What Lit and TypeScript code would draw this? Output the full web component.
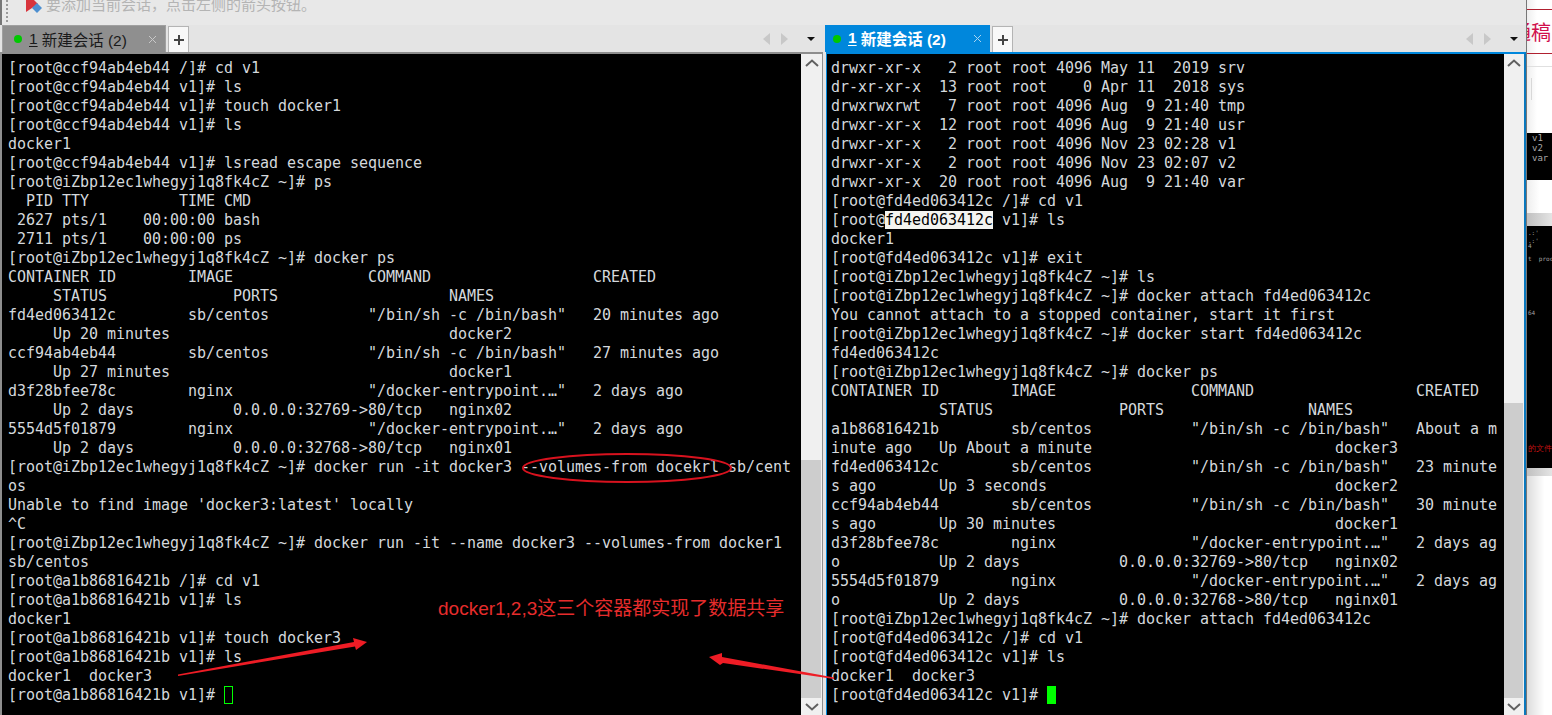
import { LitElement, html, css, svg } from "lit";
import { customElement } from "lit/decorators.js";

const LEFT = `[root@ccf94ab4eb44 /]# cd v1
[root@ccf94ab4eb44 v1]# ls
[root@ccf94ab4eb44 v1]# touch docker1
[root@ccf94ab4eb44 v1]# ls
docker1
[root@ccf94ab4eb44 v1]# lsread escape sequence
[root@iZbp12ec1whegyj1q8fk4cZ ~]# ps
  PID TTY          TIME CMD
 2627 pts/1    00:00:00 bash
 2711 pts/1    00:00:00 ps
[root@iZbp12ec1whegyj1q8fk4cZ ~]# docker ps
CONTAINER ID        IMAGE               COMMAND                  CREATED
     STATUS              PORTS                   NAMES
fd4ed063412c        sb/centos           "/bin/sh -c /bin/bash"   20 minutes ago
     Up 20 minutes                               docker2
ccf94ab4eb44        sb/centos           "/bin/sh -c /bin/bash"   27 minutes ago
     Up 27 minutes                               docker1
d3f28bfee78c        nginx               "/docker-entrypoint.…"   2 days ago
     Up 2 days           0.0.0.0:32769->80/tcp   nginx02
5554d5f01879        nginx               "/docker-entrypoint.…"   2 days ago
     Up 2 days           0.0.0.0:32768->80/tcp   nginx01
[root@iZbp12ec1whegyj1q8fk4cZ ~]# docker run -it docker3 --volumes-from docekrl sb/cent
os
Unable to find image 'docker3:latest' locally
^C
[root@iZbp12ec1whegyj1q8fk4cZ ~]# docker run -it --name docker3 --volumes-from docker1 
sb/centos
[root@a1b86816421b /]# cd v1
[root@a1b86816421b v1]# ls
docker1
[root@a1b86816421b v1]# touch docker3
[root@a1b86816421b v1]# ls
docker1  docker3
[root@a1b86816421b v1]# `.split("\n");

const RIGHT = `drwxr-xr-x   2 root root 4096 May 11  2019 srv
dr-xr-xr-x  13 root root    0 Apr 11  2018 sys
drwxrwxrwt   7 root root 4096 Aug  9 21:40 tmp
drwxr-xr-x  12 root root 4096 Aug  9 21:40 usr
drwxr-xr-x   2 root root 4096 Nov 23 02:28 v1
drwxr-xr-x   2 root root 4096 Nov 23 02:07 v2
drwxr-xr-x  20 root root 4096 Aug  9 21:40 var
[root@fd4ed063412c /]# cd v1
[root@|fd4ed063412c| v1]# ls
docker1
[root@fd4ed063412c v1]# exit
[root@iZbp12ec1whegyj1q8fk4cZ ~]# ls
[root@iZbp12ec1whegyj1q8fk4cZ ~]# docker attach fd4ed063412c
You cannot attach to a stopped container, start it first
[root@iZbp12ec1whegyj1q8fk4cZ ~]# docker start fd4ed063412c
fd4ed063412c
[root@iZbp12ec1whegyj1q8fk4cZ ~]# docker ps
CONTAINER ID        IMAGE               COMMAND                  CREATED
            STATUS              PORTS                NAMES
a1b86816421b        sb/centos           "/bin/sh -c /bin/bash"   About a m
inute ago   Up About a minute                           docker3
fd4ed063412c        sb/centos           "/bin/sh -c /bin/bash"   23 minute
s ago       Up 3 seconds                                docker2
ccf94ab4eb44        sb/centos           "/bin/sh -c /bin/bash"   30 minute
s ago       Up 30 minutes                               docker1
d3f28bfee78c        nginx               "/docker-entrypoint.…"   2 days ag
o           Up 2 days           0.0.0.0:32769->80/tcp   nginx02
5554d5f01879        nginx               "/docker-entrypoint.…"   2 days ag
o           Up 2 days           0.0.0.0:32768->80/tcp   nginx01
[root@iZbp12ec1whegyj1q8fk4cZ ~]# docker attach fd4ed063412c
[root@fd4ed063412c /]# cd v1
[root@fd4ed063412c v1]# ls
docker1  docker3
[root@fd4ed063412c v1]# `.split("\n");

const chevUp = html`<svg class="chev" viewBox="0 0 14 8"><path d="M1 7L7 1.5L13 7" fill="none" stroke="#606060" stroke-width="2"/></svg>`;
const chevDown = html`<svg class="chev" viewBox="0 0 14 8"><path d="M1 1L7 6.5L13 1" fill="none" stroke="#606060" stroke-width="2"/></svg>`;
const tabNav = html`<div class="nav">
  <svg width="7" height="12" viewBox="0 0 7 12"><path d="M7 0V12L0 6Z" fill="#c8c8c8"/></svg>
  <svg class="next" width="7" height="12" viewBox="0 0 7 12"><path d="M0 0V12L7 6Z" fill="#c8c8c8"/></svg>
  <svg class="menu" width="8" height="4" viewBox="0 0 8 4"><path d="M0 0H8L4 4Z" fill="#111"/></svg>
</div>`;

@customElement("app-root")
export class AppRoot extends LitElement {
  static styles = css`
    :host { display: block; width: 1552px; height: 715px; overflow: hidden; position: relative; background: #e4e4e4; font-family: "Liberation Sans", "Noto Sans CJK SC", sans-serif; }
    .app { display: grid; grid-template-columns: 1526px 26px; height: 715px; }
    .main { display: flex; flex-direction: column; min-width: 0; }
    .hint { height: 25px; background: #e8e8e8; display: flex; align-items: flex-start; border-left: 2px solid #777; padding-left: 4px; overflow: hidden; flex: none; }
    .grip { width: 2px; height: 22px; flex: none; background: repeating-linear-gradient(#9a9a9a 0 2px, transparent 2px 4px); margin-right: 17px; }
    .hint svg { flex: none; margin-right: 3px; }
    .hint span { font-size: 15px; color: #b4b4b4; line-height: 16px; margin-top: -3px; white-space: nowrap; }
    .panes { display: grid; grid-template-columns: 825px 701px; flex: 1; min-height: 0; }
    .pane { display: flex; flex-direction: column; min-width: 0; min-height: 0; }
    .pane.r { padding-left: 1px; }
    .tabs { height: 27px; display: flex; align-items: flex-end; flex: none; }
    .pane.l .tabs { padding-left: 2px; padding-right: 3px; }
    .tab { height: 27px; display: flex; align-items: center; box-sizing: border-box; font-size: 15.5px; position: relative; flex: none; white-space: nowrap; padding-bottom: 1px; }
    .pane.l .tab { width: 164px; background: #8f8f8f; color: #1a1a1a; padding-left: 11px; border: 1px solid #a0a0a0; border-bottom: 0; }
    .pane.r .tab { width: 165px; margin-left: -1px; background: #0087dc; color: #fff; padding-left: 8px; font-weight: 700; }
    .dot { width: 8px; height: 8px; border-radius: 50%; background: #00c800; margin: 1px 7px 0 0; flex: none; }
    .u { text-decoration: underline; text-underline-offset: 2px; margin-right: 4px; }
    .x { position: absolute; right: 9px; top: 10px; width: 7px; height: 7px; }
    .plus { width: 21px; height: 26px; box-sizing: border-box; margin-left: 2px; border: 1px solid #b4b4b4; border-bottom: 0; background: #f8f8f8; display: flex; align-items: center; justify-content: center; flex: none; }
    .nav { margin-left: auto; height: 27px; display: flex; align-items: center; }
    .nav svg { flex: none; }
    .nav .next { margin-left: 11px; }
    .nav .menu { margin-left: 19px; }
    .pane.l .nav { padding-right: 7px; }
    .pane.r .nav { padding-right: 8px; }
    .body { flex: 1; display: grid; min-height: 0; }
    .pane.l .body { grid-template-columns: 1fr 21px; border-top: 2px solid #8e8e8e; border-left: 2px solid #8e8e8e; border-right: 1px solid #8e8e8e; margin-right: 2px; }
    .pane.r .body { grid-template-columns: 1fr 20px; border-top: 2px solid #0087dc; border-left: 1px solid #0087dc; border-right: 2px solid #0a78bd; }
    .term { background: #000; overflow: hidden; margin: 0; font: 15px/19px "DejaVu Sans Mono", monospace; letter-spacing: -0.03px; color: #d4d8dc; white-space: pre; min-width: 0; }
    .pane.l .term { padding: 5px 0 0 6px; }
    .pane.r .term { padding: 5px 0 0 4px; }
    .line { height: 19px; }
    .sel { background: #f4f4f0; color: #000; }
    .cursor { display: inline-block; width: 9px; height: 18px; box-sizing: border-box; vertical-align: -4px; }
    .cursor.off { border: 1px solid #00ff00; }
    .cursor.on { background: #00ff00; }
    .scroll { background: #f0f0f0; display: flex; flex-direction: column; }
    .btn { height: 17px; display: flex; align-items: center; justify-content: center; flex: none; }
    .chev { width: 14px; height: 8px; }
    .track { flex: 1; display: flex; flex-direction: column; justify-content: flex-end; }
    .thumb { background: #cdcdcd; margin-right: 1px; }
    .pane.l .thumb { height: 238px; }
    .pane.r .thumb { height: 295px; }
    .bg { display: flex; flex-direction: column; height: 715px; background: #f2f2f2; overflow: hidden; border-left: 1px solid #777; box-sizing: border-box; }
    .bg-top { height: 133px; flex: none; background: linear-gradient(90deg, #eee, #fff 40%); overflow: hidden; }
    .red-a { height: 1px; background: #b02030; margin-top: 9px; }
    .gao { height: 43px; display: flex; align-items: center; font-size: 20px; color: #d0104c; white-space: nowrap; margin-left: -16px; font-family: "Noto Sans CJK SC", sans-serif; }
    .red-b { height: 1px; background: #b02030; }
    .rule { height: 1px; background: #e0e0e0; margin-top: 12px; }
    .tick { width: 1px; height: 22px; background: #d8d8d8; margin: 11px 0 0 4px; }
    .bg-term { background: #000; color: #c8c8c8; font: 7px/9px "DejaVu Sans Mono", monospace; white-space: pre; overflow: hidden; }
    .bg-term.a { height: 47px; flex: none; font-size: 9px; line-height: 10px; padding-left: 5px; box-sizing: border-box; color: #a8a8a8; }
    .bg-white { height: 33px; flex: none; background: linear-gradient(90deg, #eee, #fff 50%); }
    .bg-bar { height: 13px; flex: none; background: linear-gradient(90deg, #c0c0c0, #e4e4e4); }
    .bar2 { height: 8px; }
    .bg-term.b { height: 242px; flex: none; position: relative; }
    .t { position: absolute; left: 1px; font-size: 6px; color: #a0a0a0; }
    .t.red { color: #c01010; font-size: 8px; }
    .bg-rest { flex: 1; background: linear-gradient(90deg, #dcdcdc, #fff 70%); }
    .overlay { position: absolute; left: 0; top: 0; pointer-events: none; }
    .note { position: absolute; left: 438px; top: 598px; font-size: 19px; line-height: 22px; color: #e62c2c; white-space: nowrap; font-family: "Liberation Sans", "Noto Sans CJK SC", sans-serif; }
  `;

  private lines(rows: string[], cursor: string) {
    return rows.map((r, i) => {
      const parts = r.split("|");
      const last = i === rows.length - 1;
      return html`<div class="line">${parts.length === 3
        ? html`${parts[0]}<span class="sel">${parts[1]}</span>${parts[2]}`
        : r}${last ? html`<span class="cursor ${cursor}"></span>` : ""}</div>`;
    });
  }

  private pane(cls: string, rows: string[], cursor: string, xc: string) {
    return html`<section class="pane ${cls}">
      <div class="tabs">
        <div class="tab"><i class="dot"></i><span class="u">1</span>新建会话 (2)
          <svg class="x" viewBox="0 0 7 7"><path d="M0 0L7 7M7 0L0 7" stroke="${xc}" stroke-width="1"/></svg></div>
        <div class="plus"><svg width="10" height="10" viewBox="0 0 10 10"><path d="M5 0V10M0 5H10" stroke="#444" stroke-width="2"/></svg></div>
        ${tabNav}
      </div>
      <div class="body">
        <div class="term">${this.lines(rows, cursor)}</div>
        <div class="scroll">
          <div class="btn">${chevUp}</div>
          <div class="track"><div class="thumb"></div></div>
          <div class="btn">${chevDown}</div>
        </div>
      </div>
    </section>`;
  }

  render() {
    return html`<div class="app">
      <div class="main">
        <div class="hint">
          <i class="grip"></i>
          <svg width="18" height="14" viewBox="0 0 18 14"><path d="M1 0H9L13 4L7 8L1 12Z" fill="#d8343c"/><path d="M7 8L12 3L17 8L12 13Z" fill="#4d8fd0"/></svg>
          <span>要添加当前会话，点击左侧的箭头按钮。</span>
        </div>
        <div class="panes">
          ${this.pane("l", LEFT, "off", "#c8c8c8")}
          ${this.pane("r", RIGHT, "on", "#a9d4f0")}
        </div>
      </div>
      <aside class="bg">
        <div class="bg-top"><div class="red-a"></div><div class="gao">通稿</div><div class="red-b"></div><div class="rule"></div><div class="tick"></div></div>
        <div class="bg-term a">${"v1\nv2\nvar"}</div>
        <div class="bg-white"></div>
        <div class="bg-bar"></div>
        <div class="bg-term b">
          <span class="t" style="top:2px">${".:'    2"}</span>
          <span class="t" style="top:10px">${".:'    2"}</span>
          <span class="t" style="top:15px">4</span>
          <span class="t" style="top:28px">${"t  proc"}</span>
          <span class="t" style="top:82px">64</span>
          <span class="t red" style="top:218px">的文件.</span>
        </div>
        <div class="bg-bar bar2"></div>
        <div class="bg-rest"></div>
      </aside>
    </div>
    <svg class="overlay" width="1552" height="715" viewBox="0 0 1552 715">
      ${svg`<ellipse cx="627" cy="468" rx="104" ry="14" fill="none" stroke="#d8121e" stroke-width="2"/>
      <path d="M178 674.5L354 642L353 638L367 642L356 650L355 646.5L178 676Z" fill="#ee1c25"/>
      <path d="M834 677.5L834 679L723 663L720 665L709 657L722 653L722 657Z" fill="#ee1c25"/>`}
    </svg>
    <div class="note">docker1,2,3这三个容器都实现了数据共享</div>`;
  }
}
